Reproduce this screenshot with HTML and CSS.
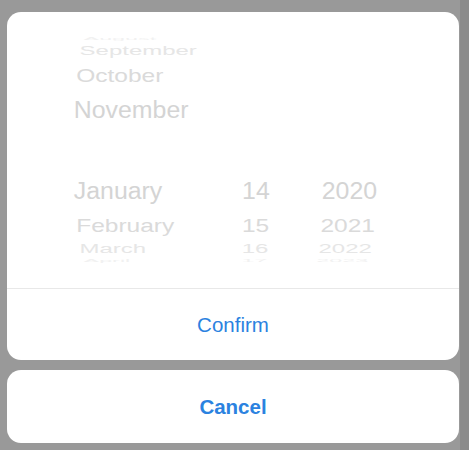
FILE: index.html
```html
<!DOCTYPE html>
<html>
<head>
<meta charset="utf-8">
<link rel="stylesheet" href="styles.css">
</head>
<body>
<div class="screen">
  <div class="sheet">
    <div class="card">
      <div class="picker">
        <div class="col months">
          <div class="item p4 c4">August</div>
          <div class="item p3 c3">September</div>
          <div class="item p2 c2">October</div>
          <div class="item p1 c1">November</div>
          <div class="item n1 c1">January</div>
          <div class="item n2 c2">February</div>
          <div class="item n3 c3">March</div>
          <div class="item n4 c4">April</div>
        </div>
        <div class="col days">
          <div class="item n1 c1">14</div>
          <div class="item n2 c2">15</div>
          <div class="item n3 c3">16</div>
          <div class="item n4 c4">17</div>
        </div>
        <div class="col years">
          <div class="item n1 c1">2020</div>
          <div class="item n2 c2">2021</div>
          <div class="item n3 c3">2022</div>
          <div class="item n4 c4">2023</div>
        </div>
      </div>
      <div class="action confirm">Confirm</div>
    </div>
    <div class="card">
      <div class="action cancel">Cancel</div>
    </div>
  </div>
</div>
</body>
</html>
```
FILE: styles.css
```css
html, body {
  margin: 0;
  padding: 0;
}
body {
  background: #8b8b8b;
  font-family: "Liberation Sans", Arial, sans-serif;
}
.screen {
  width: 460px;
  height: 450px;
  background: #999999;
  padding: 12px 0 0 7px;
  box-sizing: border-box;
}
.sheet {
  width: 452px;
  display: flex;
  flex-direction: column;
  gap: 10px;
}
.card {
  background: #ffffff;
  border-radius: 14px;
  overflow: hidden;
}
.picker {
  height: 276px;
  display: flex;
  padding-left: 66px;
}
.col {
  display: grid;
  grid-template-rows: 276px;
  height: 276px;
}
.months { width: 148px; text-align: left; }
.days { width: 70px; text-align: center; }
.years { width: 118px; text-align: center; }
.item {
  grid-area: 1 / 1;
  align-self: center;
  height: 42px;
  line-height: 42px;
  font-size: 25px;
  white-space: nowrap;
}
/* scale toward the picker's centre line (page x = 233) */
.months .item { transform-origin: 160px 50%; }
.days .item { transform-origin: 12px 50%; }
.years .item { transform-origin: -58px 50%; }

.p1 { transform: translateY(-40.5px) scale(0.995, 0.935); }
.p2 { transform: translateY(-75px) scale(0.98, 0.751); }
.p3 { transform: translateY(-99px) scale(0.959, 0.48); }
.p4 { transform: translateY(-111px) scale(0.934, 0.162); }
.n1 { transform: translateY(40.5px) scale(0.995, 0.935); }
.n2 { transform: translateY(75px) scale(0.98, 0.751); }
.n3 { transform: translateY(99px) scale(0.959, 0.48); }
.n4 { transform: translateY(111px) scale(0.934, 0.162); }

.c1 { color: #d4d4d4; }
.c2 { color: #dadada; }
.c3 { color: #e6e6e6; }
.c4 { color: #f1f1f1; }
.action {
  display: flex;
  align-items: center;
  justify-content: center;
  color: #2b82e0;
  font-size: 20.5px;
}
.confirm {
  height: 71px;
  border-top: 1px solid #e8e8e8;
}
.cancel {
  height: 73px;
  font-weight: bold;
}
```
